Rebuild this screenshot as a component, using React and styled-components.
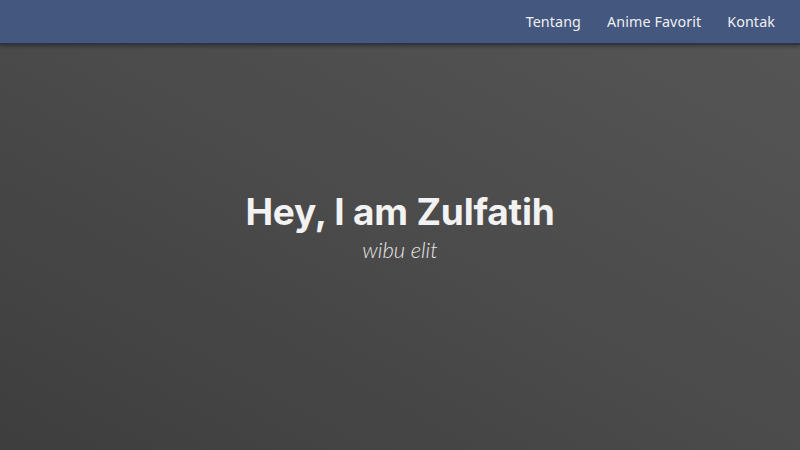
import styled, { createGlobalStyle } from "styled-components";

const GlobalStyle = createGlobalStyle`
  html, body {
    margin: 0;
    padding: 0;
    height: 100%;
  }
  #root {
    height: 100%;
  }
`;

export default function App() {
  return (
    <>
      <GlobalStyle />
      <StyledPage>
        <StyledNav>
          <StyledMenu>
            <li><StyledLink href="#tentang">Tentang</StyledLink></li>
            <li><StyledLink href="#anime">Anime Favorit</StyledLink></li>
            <li><StyledLink href="#kontak">Kontak</StyledLink></li>
          </StyledMenu>
        </StyledNav>
        <StyledHero>
          <StyledTitle>Hey, I am Zulfatih</StyledTitle>
          <StyledSubtitle>wibu elit</StyledSubtitle>
        </StyledHero>
      </StyledPage>
    </>
  );
}

const StyledPage = styled.div`
  height: 450px;
  display: flex;
  flex-direction: column;
  background: linear-gradient(to top right, #3e3e3e 0%, #4b4b4b 50%, #565656 100%);
`;

const StyledNav = styled.nav`
  height: 43px;
  flex-shrink: 0;
  background-color: #44577e;
  border-bottom: 2px solid #2f3444;
  box-shadow: 0px 2px 3px rgba(0, 0, 0, 0.25);
  display: flex;
  justify-content: flex-end;
  align-items: center;
`;

const StyledMenu = styled.ul`
  list-style-type: none;
  margin: 0;
  padding: 0 25px 0 0;
  display: flex;
  gap: 26px;
`;

const StyledLink = styled.a`
  text-decoration: none;
  color: #eef0f4;
  font-family: "Noto Sans", "Open Sans", sans-serif;
  font-size: 14.3px;
  letter-spacing: 0.1px;
`;

const StyledHero = styled.main`
  flex: 1;
  display: flex;
  flex-direction: column;
  align-items: center;
  padding-top: 145px;
`;

const StyledTitle = styled.h1`
  margin: 0;
  color: #f2f2f2;
  font-family: "Inter", "Lato", sans-serif;
  font-weight: 700;
  font-size: 37px;
  letter-spacing: -0.2px;
  line-height: 44px;
`;

const StyledSubtitle = styled.p`
  margin: 2px 0 0 0;
  color: #e6e6e6;
  font-family: "Lato", sans-serif;
  font-style: italic;
  font-weight: 300;
  font-size: 22px;
  line-height: 28px;
`;
